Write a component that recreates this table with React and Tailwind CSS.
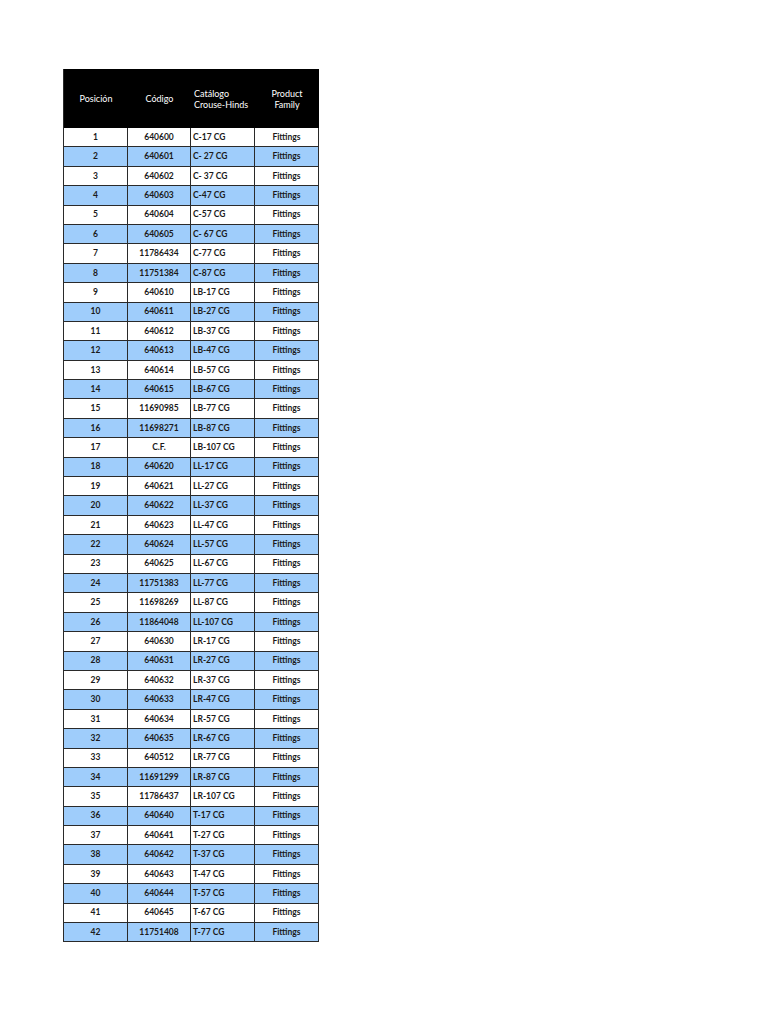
const rows = [
  ["1", "640600", "C-17 CG"],
  ["2", "640601", "C- 27 CG"],
  ["3", "640602", "C- 37 CG"],
  ["4", "640603", "C-47 CG"],
  ["5", "640604", "C-57 CG"],
  ["6", "640605", "C- 67 CG"],
  ["7", "11786434", "C-77 CG"],
  ["8", "11751384", "C-87 CG"],
  ["9", "640610", "LB-17 CG"],
  ["10", "640611", "LB-27 CG"],
  ["11", "640612", "LB-37 CG"],
  ["12", "640613", "LB-47 CG"],
  ["13", "640614", "LB-57 CG"],
  ["14", "640615", "LB-67 CG"],
  ["15", "11690985", "LB-77 CG"],
  ["16", "11698271", "LB-87 CG"],
  ["17", "C.F.", "LB-107 CG"],
  ["18", "640620", "LL-17 CG"],
  ["19", "640621", "LL-27 CG"],
  ["20", "640622", "LL-37 CG"],
  ["21", "640623", "LL-47 CG"],
  ["22", "640624", "LL-57 CG"],
  ["23", "640625", "LL-67 CG"],
  ["24", "11751383", "LL-77 CG"],
  ["25", "11698269", "LL-87 CG"],
  ["26", "11864048", "LL-107 CG"],
  ["27", "640630", "LR-17 CG"],
  ["28", "640631", "LR-27 CG"],
  ["29", "640632", "LR-37 CG"],
  ["30", "640633", "LR-47 CG"],
  ["31", "640634", "LR-57 CG"],
  ["32", "640635", "LR-67 CG"],
  ["33", "640512", "LR-77 CG"],
  ["34", "11691299", "LR-87 CG"],
  ["35", "11786437", "LR-107 CG"],
  ["36", "640640", "T-17 CG"],
  ["37", "640641", "T-27 CG"],
  ["38", "640642", "T-37 CG"],
  ["39", "640643", "T-47 CG"],
  ["40", "640644", "T-57 CG"],
  ["41", "640645", "T-67 CG"],
  ["42", "11751408", "T-77 CG"],
];

export default function App() {
  return (
    <div
      className="min-h-[1024px] w-[768px] bg-white pt-[69px] pl-[63px]"
      style={{ fontFamily: "Lato, 'Open Sans', sans-serif" }}
    >
      <div className="w-[256px] border-l border-[#2a2a2a]">
        <div className="grid h-[59px] grid-cols-[64px_63px_64px_64px] items-center bg-black text-[9px] leading-[11px] text-white">
          <div className="text-center">Posición</div>
          <div className="text-center">Código</div>
          <div className="pl-[3px]">
            Catálogo
            <br />
            Crouse-Hinds
          </div>
          <div className="text-center">
            Product
            <br />
            Family
          </div>
        </div>
        {rows.map((r, i) => (
          <div
            key={r[0]}
            className={
              "grid h-[19.4px] grid-cols-[64px_63px_64px_64px] border-b border-[#2a2a2a] text-[8.5px] font-bold text-[#1a1a1a] " +
              (i % 2 === 1 ? "bg-[#9fcdfb]" : "bg-white")
            }
          >
            <div className="flex items-center justify-center border-r border-[#2a2a2a]">{r[0]}</div>
            <div className="flex items-center justify-center border-r border-[#2a2a2a]">{r[1]}</div>
            <div className="flex items-center border-r border-[#2a2a2a] pl-[2px]">{r[2]}</div>
            <div className="flex items-center justify-center border-r border-[#2a2a2a]">Fittings</div>
          </div>
        ))}
      </div>
    </div>
  );
}
